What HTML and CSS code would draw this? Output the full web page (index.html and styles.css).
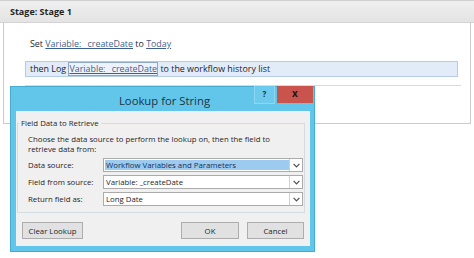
FILE: index.html
```html
<!DOCTYPE html>
<html lang="en">
<head>
  <meta charset="UTF-8"/>
  <title>Lookup for String</title>
  <link rel="stylesheet" href="styles.css">
</head>
<body>
  <!-- Workflow stage -->
  <div class="stage">
    <div class="stage-head">Stage: Stage 1</div>
    <div class="stage-body">
      <div class="step">Set <span class="link">Variable: _createDate</span> to <span class="link">Today</span></div>
      <div class="step step-active">then Log <span class="link link-box">Variable: _createDate</span> to the workflow history list</div>
      <div class="step-sep"></div>
    </div>
  </div>

  <!-- Lookup dialog -->
  <div class="dialog">
    <div class="titlebar">
      <span></span>
      <span class="title">Lookup for String</span>
      <div class="tb-buttons">
        <span class="tb-help">?</span>
        <span class="tb-close">x</span>
      </div>
    </div>
    <div class="dialog-body">
      <fieldset class="group">
        <legend>Field Data to Retrieve</legend>
        <div class="group-inner">
          <p class="intro">Choose the data source to perform the lookup on, then the field to<br>retrieve data from:</p>
          <div class="form">
            <label>Data source:</label>
            <div class="combo combo-focus">
              <span class="combo-text">Workflow Variables and Parameters</span>
              <span class="combo-arrow"><svg width="7" height="5" viewBox="0 0 7 5"><polyline points="0.6,0.8 3.5,3.8 6.4,0.8" fill="none" stroke="#505050" stroke-width="1.2"/></svg></span>
            </div>
            <label>Field from source:</label>
            <div class="combo">
              <span class="combo-text">Variable: _createDate</span>
              <span class="combo-arrow"><svg width="7" height="5" viewBox="0 0 7 5"><polyline points="0.6,0.8 3.5,3.8 6.4,0.8" fill="none" stroke="#505050" stroke-width="1.2"/></svg></span>
            </div>
            <label>Return field as:</label>
            <div class="combo">
              <span class="combo-text">Long Date</span>
              <span class="combo-arrow"><svg width="7" height="5" viewBox="0 0 7 5"><polyline points="0.6,0.8 3.5,3.8 6.4,0.8" fill="none" stroke="#505050" stroke-width="1.2"/></svg></span>
            </div>
          </div>
        </div>
      </fieldset>
      <div class="buttons">
        <button class="btn btn-clear">Clear Lookup</button>
        <span class="spacer"></span>
        <button class="btn btn-ok">OK</button>
        <button class="btn btn-cancel">Cancel</button>
      </div>
    </div>
  </div>
</body>
</html>
```

FILE: styles.css
```css
*, *::before, *::after { box-sizing: border-box; }

body {
  margin: 0;
  background: #fff; color: #1f1f1f;
  font-family: 'Open Sans', 'Noto Sans', sans-serif;
}

/* Stage panel */
.stage-head {
  height: 23px;
  padding-left: 10px;
  background: linear-gradient(#efefef, #e4e4e4);
  border-top: 1px solid #cfcfcf;
  border-bottom: 1px solid #d4d4d4;
  font-size: 9px; font-weight: bold;
  line-height: 21px;
}
.stage-body {
  height: 101px;
  margin: 0 3px;
  border: 1px solid #cbcbcb; border-top: none;
  padding-top: 13px;
}
.step {
  height: 16px;
  margin: 0 12px 9px 21px;
  padding-left: 4px;
  border: 1px solid transparent;
  font-size: 8.9px; line-height: 14px;
  white-space: nowrap;
}
.step-active {
  background: #e2ecf9;
  border-color: #b5cbe6;
}
.link {
  color: #3f5f8e;
  text-decoration: underline;
}
.link-box {
  display: inline-block;
  height: 14px; line-height: 12px;
  border: 1px solid #8ea7c6;
  background: #edf3fb;
  vertical-align: top;
}
.step-sep {
  height: 1px;
  margin: -1px 9px 0 21px;
  background: #dadada;
}

/* Dialog window */
.dialog {
  position: absolute; left: 10px; top: 86px;
  width: 305px; height: 166px;
  background: #62c6ea;
  border: 1px solid #46acd4;
  padding: 0 4px 5px 5px;
  display: flex; flex-direction: column;
}
.titlebar {
  height: 24px;
  display: grid;
  grid-template-columns: 1fr auto 1fr;
  margin-right: -3px;
}
.title {
  font-size: 11.3px; color: #1c3447;
  line-height: 14px; padding-top: 7px;
}
.tb-buttons {
  display: flex; justify-content: flex-end; align-items: flex-start;
  gap: 2px; margin-top: -1px;
}
.tb-help {
  width: 21px; height: 18px;
  border: 1px solid #8fd7f1; border-top: none;
  background: #6ccbec;
  font-size: 8px; font-weight: bold; color: #1e2b33;
  text-align: center; line-height: 16px;
}
.tb-close {
  width: 36px; height: 17px;
  background: #c8544d;
  font-size: 10px; font-weight: bold; color: #2a1412;
  text-align: center; line-height: 15px;
}
.dialog-body {
  flex: 1;
  background: #f0f0f0;
  padding: 0 6px 6px;
  font-size: 7.8px; color: #1e1e1e;
}

/* Group box */
.group {
  margin: 6px -1px 0 -5px;
  padding: 0 1px 6px 1px;
  border: 1px solid #d6dde2;
}
.group legend {
  padding: 0 2px;
  line-height: 12px;
}
.group-inner { padding: 5px 0 0 9px; }
.intro {
  margin: 0;
  line-height: 10px;
}
.form {
  margin-top: 4px;
  display: grid;
  grid-template-columns: 75px 1fr;
  row-gap: 3px;
  align-items: center;
}
.form label { white-space: nowrap; }
.combo {
  height: 14px;
  display: flex;
  background: #fff;
  border: 1px solid #ababab;
}
.combo-text {
  flex: 1;
  padding-left: 2px;
  line-height: 12px;
}
.combo-focus .combo-text {
  margin: 1px 0 1px 1px;
  padding-left: 1px;
  line-height: 10px;
  background: #9dcaef; color: #12305a;
}
.combo-arrow {
  width: 13px;
  border-left: 1px solid #d2d2d2;
  display: flex; align-items: center; justify-content: center;
}

/* Buttons */
.buttons {
  display: flex; gap: 8px;
  margin-top: 9px;
}
.spacer { flex: 1; }
.btn {
  height: 17px; padding: 0;
  background: #e1e1e1;
  border: 1px solid #adadad; border-radius: 0;
  font-family: inherit; font-size: 7.8px; color: #1e1e1e;
}
.btn-clear { width: 61px; }
.btn-ok { width: 58px; }
.btn-cancel { width: 57px; }
```
